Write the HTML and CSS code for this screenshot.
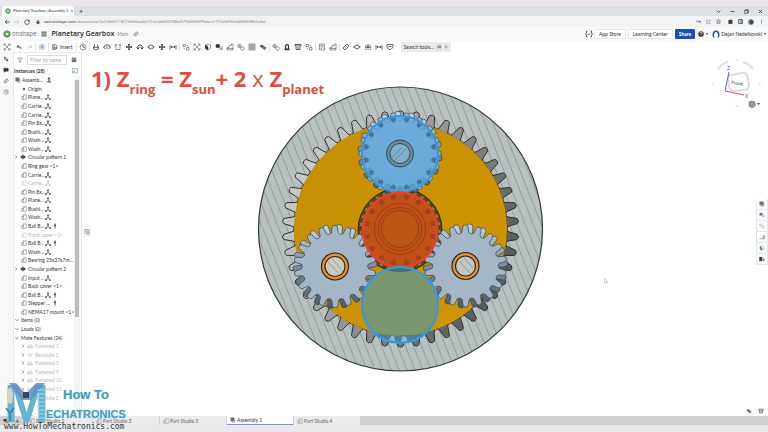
FILE: index.html
```html
<!DOCTYPE html>
<html lang="en">
<head>
    <meta charset="UTF-8">
    <meta name="viewport" content="width=device-width, initial-scale=1.0">
    <title>Planetary Gearbox | Assembly 1</title>
    <link rel="stylesheet" href="styles.css">
</head>
<body>
    <svg class="defs" aria-hidden="true">
        <symbol id="logo" viewBox="0 0 16 16"><path d="M8 1l6 3.500v7L8 15l-6-3.500v-7z" fill="#6cbb6e"/><circle cx="8" cy="8" r="3.500" fill="#e9f6e9" stroke="#3c9b49" stroke-width="1.500"/></symbol>
        <symbol id="part" viewBox="0 0 16 16"><path d="M6 14V2h8v12zM6 7H2v7h4M6 7l3-3"/></symbol>
        <symbol id="mate" viewBox="0 0 16 16"><path d="M8 2v7M8 9l-5 4M8 9l5 4" stroke-width="2"/><path d="M6 4l2-3 2 3zM1 12v3h4zM15 12v3h-4z" fill="currentColor"/></symbol>
        <symbol id="fixed" viewBox="0 0 16 16"><path d="M8 1v14M5 7h6M6 5h4" stroke-width="2"/></symbol>
        <symbol id="anchor" viewBox="0 0 16 16"><path d="M8 2v11M5 6l3-4 3 4M3 13h10" stroke-width="2.500"/></symbol>
        <symbol id="origin" viewBox="0 0 16 16"><circle cx="8" cy="8" r="2.500" fill="currentColor"/></symbol>
        <symbol id="asm" viewBox="0 0 16 16"><path d="M2 2h9v9H2z" fill="#888"/><path d="M13 5v9H5M5 5h4M5 8h4"/></symbol>
        <symbol id="right" viewBox="0 0 16 16"><path d="M5 2l6 6-6 6" stroke-width="2.500"/></symbol>
        <symbol id="down" viewBox="0 0 16 16"><path d="M2 5l6 6 6-6" stroke-width="2.500"/></symbol>
        <symbol id="caret" viewBox="0 0 16 16"><path d="M3 5h10l-5 7z" fill="currentColor" stroke="none"/></symbol>
        <symbol id="pattern" viewBox="0 0 16 16"><path d="M8 2l2 3H6zM8 14l2-3H6zM1 8l4-3v6zM15 8l-4-3v6zM5 6h6v4H5z" fill="currentColor"/></symbol>
        <symbol id="fasten" viewBox="0 0 16 16"><path d="M2 8v5h12V8M5 3v7h6V3" stroke-width="2"/></symbol>
        <symbol id="revolute" viewBox="0 0 16 16"><path d="M6 4L2 8l4 4M10 4l4 4-4 4M8 6v4" stroke-width="2"/></symbol>
        <symbol id="funnel" viewBox="0 0 16 16"><path d="M2 3h12l-5 6v5H7V9z"/></symbol>
        <symbol id="list" viewBox="0 0 16 16"><path d="M2 3h12M2 6h12M2 9h12M2 12h12" stroke-width="2"/></symbol>
        <symbol id="outline" viewBox="0 0 16 16"><path d="M1 2h14M6 6h9M6 10h9M6 14h9M3 3v11" stroke-width="1.500"/></symbol>
        <symbol id="panel" viewBox="0 0 16 16"><path d="M1 4V2h14v11H9M1 6v7h5M3 8h4v5" stroke-width="1.500"/></symbol>
        <symbol id="box" viewBox="0 0 16 16"><path d="M2 2h4M10 2h4M2 14h4M10 14h4M2 2v4M14 2v4M2 10v4M14 10v4M3 3l10 10M13 3L3 13"/></symbol>
        <symbol id="undo" viewBox="0 0 16 16"><path d="M13 13c0-5-3-6-9-6M7 3L3 7l4 4" stroke-width="2.500"/></symbol>
        <symbol id="redo" viewBox="0 0 16 16"><path d="M3 13c0-5 3-6 9-6M9 3l4 4-4 4" stroke-width="2"/></symbol>
        <symbol id="globe" viewBox="0 0 16 16"><circle cx="8" cy="8" r="6" fill="#dbe7f3" stroke="#a9c2dc"/><path d="M5 6h6M5 9h6M8 4v8"/></symbol>
        <symbol id="insert" viewBox="0 0 16 16"><path d="M9 14H2V2h7l4 4v3M6 6v5h7M10 8l3 3-3 3" stroke-width="2"/></symbol>
        <symbol id="clock" viewBox="0 0 16 16"><circle cx="8" cy="8" r="6"/><path d="M8 4v4l4 1" stroke-width="1.500"/></symbol>
        <symbol id="slot" viewBox="0 0 16 16"><path d="M3 7v5l5 2 5-2V7M5 3v6h6V3" stroke-width="1.500"/></symbol>
        <symbol id="hinge" viewBox="0 0 16 16"><path d="M2 8c0-6 12-6 12 0M8 5v7M4 7l-3 2 4 3M12 7l3 2-4 3" stroke-width="1.500"/></symbol>
        <symbol id="cyl" viewBox="0 0 16 16"><path d="M4 4v9h8V4M2 6l2-4 2 3M10 5l2-3 2 4"/></symbol>
        <symbol id="move" viewBox="0 0 16 16"><path d="M8 3v10M3 8h10" stroke-width="2"/><path d="M6 4l2-2 2 2zM6 12l2 2 2-2zM4 6L2 8l2 2zM12 6l2 2-2 2z" fill="currentColor"/></symbol>
        <symbol id="ball" viewBox="0 0 16 16"><path d="M4 10c-3-8 11-8 8 0M1 9l3 3 3-3M9 9l3 3 3-3" stroke-width="2"/></symbol>
        <symbol id="pinslot" viewBox="0 0 16 16"><path d="M3 8c0-5 10-5 10 0s-10 5-10 0M1 8h4M11 8h4" stroke-width="1.500"/></symbol>
        <symbol id="tangent" viewBox="0 0 16 16"><path d="M2 4v9M14 4v9M4 8h8M6 6L4 8l2 2M10 6l2 2-2 2" stroke-width="1.500"/></symbol>
        <symbol id="rel" viewBox="0 0 16 16"><path d="M2 3h5v4H2zM9 9h5v5H9zM9 4l4 3M7 13l-4-3"/></symbol>
        <symbol id="solid" viewBox="0 0 16 16"><path d="M3 4l5-2 5 2v7l-5 3-5-3z"/><path d="M8 7v7l-5-3V4z" fill="currentColor"/></symbol>
        <symbol id="copy" viewBox="0 0 16 16"><path d="M2 3h7v6H2z" fill="currentColor"/><path d="M7 12h7V6M11 9l4 5"/></symbol>
        <symbol id="bend" viewBox="0 0 16 16"><path d="M2 14V9h4V5h5V2h3v12zM2 11h12"/></symbol>
        <symbol id="gear" viewBox="0 0 16 16"><circle cx="5" cy="6" r="3.500"/><circle cx="11" cy="11" r="3.500"/><circle cx="5" cy="6" r="1"/></symbol>
        <symbol id="grid" viewBox="0 0 16 16"><path d="M2 2h12v12H2zM2 6h12M2 10h12M6 2v12M10 2v12"/></symbol>
        <symbol id="screw" viewBox="0 0 16 16"><path d="M2 6l4-2 4 3 4 3-4 3-4-4zM6 9l4-3" fill="#888" stroke-width="1.500"/></symbol>
        <symbol id="stamp" viewBox="0 0 16 16"><path d="M3 13h10M5 12V6a3 3 0 016 0v6z" stroke-width="2.500"/></symbol>
        <symbol id="tray" viewBox="0 0 16 16"><path d="M2 3h12v3H2zM4 7v6h8V7M6 10h4" stroke-width="1.500"/></symbol>
        <symbol id="bom" viewBox="0 0 16 16"><path d="M3 2h10v12H3zM5 5h6M5 8h6M5 11h3M10 11h1"/></symbol>
        <symbol id="cloud" viewBox="0 0 16 16"><path d="M3 9c-2-7 12-7 10 0zM2 14l2-3M8 14v-3M14 14l-2-3M6 7h4" stroke-width="1.500"/></symbol>
        <symbol id="shield" viewBox="0 0 16 16"><path d="M2 3h12v6l-3 2-3 3-3-3-3-2zM5 7h6" stroke-width="1.500"/></symbol>
        <symbol id="chat" viewBox="0 0 16 16"><path d="M2 3h12v8H8l-4 3v-3H2z" fill="currentColor"/></symbol>
        <symbol id="link" viewBox="0 0 16 16"><path d="M7 5l3-3 4 4-5 5-2-2M9 11l-3 3-4-4 5-5 2 2" stroke-width="1.500"/></symbol>
        <symbol id="versions" viewBox="0 0 16 16"><path d="M5 2v9M5 5h4M11 7v7M8 11h6" stroke-width="2.500" stroke="#2c4470"/></symbol>
    </svg>

    <div class="window-edge"></div>
    <header class="tabstrip">
        <div class="browser-tab">
            <svg class="i"><use href="#logo"/></svg>
            <span class="tab-title">Planetary Gearbox | Assembly 1</span>
            <button class="bare" aria-label="Close tab">×</button>
        </div>
        <button class="bare plus" aria-label="New tab">+</button>
        <div class="window-buttons">
            <button class="bare" aria-label="Search tabs"><svg class="i s5"><use href="#down"/></svg></button>
            <button class="bare" aria-label="Minimize"><svg class="i s5" viewBox="0 0 16 16"><path d="M2 8h12" stroke-width="2.500"/></svg></button>
            <button class="bare" aria-label="Restore"><svg class="i s5" viewBox="0 0 16 16"><path d="M2 5h9v9H2zM5 5V2h9v9h-3" stroke-width="2"/></svg></button>
            <button class="bare" aria-label="Close"><svg class="i s5" viewBox="0 0 16 16"><path d="M3 3l10 10M13 3L3 13" stroke-width="2.500"/></svg></button>
        </div>
    </header>

    <div class="addressbar">
        <button class="bare" aria-label="Back"><svg class="i" viewBox="0 0 16 16"><path d="M15 8H3M8 3L3 8l5 5" stroke-width="2"/></svg></button>
        <button class="bare off" aria-label="Forward"><svg class="i" viewBox="0 0 16 16"><path d="M1 8h12M8 3l5 5-5 5" stroke-width="1.500"/></svg></button>
        <button class="bare" aria-label="Reload"><svg class="i" viewBox="0 0 16 16"><path d="M13 5a6 6 0 10 1 4M14 2v4h-4" stroke-width="2"/></svg></button>
        <svg class="i s4 lock" viewBox="0 0 16 16"><path d="M3 7h10v7H3z" fill="currentColor"/><path d="M5 7V2h6v5" stroke-width="2"/></svg>
        <span class="url"><b>cad.onshape.com</b>/documents/5a1fd6b5118279e66bad6e72/w/dd600038bc079683d9ff9bda/e/7f1bf4f9fbfd40f8598b2cfbd</span>
        <div class="extensions">
            <svg class="i s5" viewBox="0 0 16 16"><circle cx="4" cy="8" r="3"/><path d="M7 8h8v4M11 8v3" stroke-width="2"/></svg>
            <svg class="i s5" viewBox="0 0 16 16"><path d="M6 3H2v11h11v-4M6 10c0-4 3-5 8-5M11 2l3 3-3 3"/></svg>
            <svg class="i s5" viewBox="0 0 16 16"><path d="M8 1l2 5h5l-4 4 2 5-5-3-5 3 2-5-4-4h5z" stroke-width="1.500"/></svg>
            <svg class="i s5 gap-left" viewBox="0 0 16 16"><path d="M2 4h4a2 2 0 014 0h4v4h-2v3h2v4H2z" fill="currentColor"/></svg>
            <svg class="i s5" viewBox="0 0 16 16"><path d="M2 2h12v12H2zM10 2v12" stroke-width="2.500"/></svg>
            <svg class="i" viewBox="0 0 16 16"><circle cx="8" cy="8" r="7.500" fill="#68787c" stroke="none"/><path d="M8 3v10M11 5v7" stroke="#333" stroke-width="3"/></svg>
            <svg class="i s5" viewBox="0 0 16 16"><path d="M8 2v2M8 7v2M8 12v2" stroke-width="3"/></svg>
        </div>
    </div>

    <div class="docbar">
        <svg class="i s8"><use href="#logo"/></svg>
        <span class="brand">onshape</span>
        <button class="bare menu" aria-label="Menu"><svg class="i" viewBox="0 0 16 16"><path d="M1 3h14M1 8h14M1 13h14" stroke-width="2.500"/></svg></button>
        <h1 class="doc-title">Planetary Gearbox</h1>
        <span class="branch">Main</span>
        <svg class="i"><use href="#link"/></svg>
        <div class="account">
            <svg class="i s8" viewBox="0 0 16 16"><path d="M5 2H3v4L1 8l2 2v4h2M11 2h2v4l2 2-2 2v4h-2M5 8l2 2 4-4" stroke-width="1.500"/></svg>
            <button class="btn">App Store</button>
            <button class="btn">Learning Center</button>
            <button class="btn share">Share</button>
            <svg class="i help" viewBox="0 0 16 16"><circle cx="8" cy="8" r="7" fill="#333"/><path d="M5 6c0-4 6-3 6 0 0 2-3 2-3 4M8 12v1" stroke="#fff" stroke-width="2"/></svg>
            <svg class="i s4"><use href="#caret"/></svg>
            <svg class="i s8 avatar" viewBox="0 0 16 16"><path d="M2 15C-1 6 3 1 8 1s9 5 6 14h-4l2-2c1-12-9-12-8 0l2 2z" fill="#2456a8" stroke="none"/></svg>
            <span class="user">Dejan Nedelkovski</span>
            <svg class="i s4"><use href="#caret"/></svg>
        </div>
    </div>

    <div class="toolbar">
        <svg class="i s8"><use href="#box"/></svg>
        <svg class="i undo"><use href="#undo"/></svg>
        <svg class="i redo off"><use href="#redo"/></svg>
        <span class="sep"></span>
        <svg class="i s8 blue"><use href="#globe"/></svg>
        <span class="sep"></span>
        <button class="bare insert"><svg class="i"><use href="#insert"/></svg>Insert</button>
        <span class="sep"></span>
        <svg class="i s8"><use href="#clock"/></svg>
        <span class="sep"></span>
        <svg class="i s8"><use href="#slot"/></svg>
        <svg class="i s8"><use href="#hinge"/></svg>
        <svg class="i s8"><use href="#cyl"/></svg>
        <svg class="i s8"><use href="#move"/></svg>
        <svg class="i s8"><use href="#ball"/></svg>
        <svg class="i s8"><use href="#pinslot"/></svg>
        <svg class="i s8"><use href="#move"/></svg>
        <svg class="i s8"><use href="#tangent"/></svg>
        <span class="sep"></span>
        <svg class="i s8"><use href="#rel"/></svg>
        <svg class="i s8"><use href="#box"/></svg>
        <svg class="i s8"><use href="#solid"/></svg>
        <svg class="i s8"><use href="#copy"/></svg>
        <svg class="i s8"><use href="#bend"/></svg>
        <svg class="i s8"><use href="#gear"/></svg>
        <svg class="i s8"><use href="#grid"/></svg>
        <svg class="i s8"><use href="#screw"/></svg>
        <span class="sep"></span>
        <svg class="i s8"><use href="#gear"/></svg>
        <svg class="i s8"><use href="#stamp"/></svg>
        <svg class="i s8"><use href="#tray"/></svg>
        <svg class="i s8"><use href="#rel"/></svg>
        <span class="sep"></span>
        <svg class="i s8"><use href="#bom"/></svg>
        <svg class="i s8"><use href="#bend"/></svg>
        <span class="sep"></span>
        <svg class="i s8"><use href="#link"/></svg>
        <svg class="i s8"><use href="#pinslot"/></svg>
        <svg class="i s8"><use href="#cloud"/></svg>
        <svg class="i s8"><use href="#tangent"/></svg>
        <svg class="i s8"><use href="#shield"/></svg>
        <button class="search"><span>Search tools...</span><kbd>alt</kbd><kbd>c</kbd></button>
    </div>

    <main class="workspace">
        <nav class="rail">
            <svg class="i"><use href="#versions"/></svg>
            <svg class="i"><use href="#chat"/></svg>
            <svg class="i"><use href="#link"/></svg>
            <svg class="i"><use href="#clock"/></svg>
        </nav>

        <aside class="tree">
            <div class="filter">
                <svg class="i"><use href="#funnel"/></svg>
                <input type="text" placeholder="Filter by name" aria-label="Filter by name">
                <svg class="i"><use href="#list"/></svg>
            </div>
            <div class="instances"><span>Instances (28)</span><svg class="i blue"><use href="#panel"/></svg></div>
            <div class="tree-body">
                <ul class="rows">
                    <li class="root"><svg class="i"><use href="#asm"/></svg><span class="long">Assemb...</span><svg class="i"><use href="#anchor"/></svg></li>
                    <li><svg class="i"><use href="#origin"/></svg>Origin</li>
                    <li><svg class="i"><use href="#part"/></svg><span class="short">Plane...</span><svg class="i"><use href="#mate"/></svg></li>
                    <li><svg class="i"><use href="#part"/></svg><span class="short">Carrie...</span><svg class="i"><use href="#mate"/></svg></li>
                    <li><svg class="i"><use href="#part"/></svg><span class="short">Carrie...</span><svg class="i"><use href="#mate"/></svg></li>
                    <li><svg class="i"><use href="#part"/></svg><span class="short">Pin 8x...</span><svg class="i"><use href="#mate"/></svg></li>
                    <li><svg class="i"><use href="#part"/></svg><span class="short">Bushi...</span><svg class="i"><use href="#mate"/></svg></li>
                    <li><svg class="i"><use href="#part"/></svg><span class="short">Wash...</span><svg class="i"><use href="#mate"/></svg></li>
                    <li><svg class="i"><use href="#part"/></svg><span class="short">Wash...</span><svg class="i"><use href="#mate"/></svg></li>
                    <li class="group"><svg class="i s4"><use href="#right"/></svg><svg class="i"><use href="#pattern"/></svg>Circular pattern 1</li>
                    <li><svg class="i"><use href="#part"/></svg>Ring gear &lt;1&gt;</li>
                    <li><svg class="i"><use href="#part"/></svg><span class="short">Carrie...</span><svg class="i"><use href="#mate"/></svg></li>
                    <li class="off"><svg class="i"><use href="#part"/></svg><span class="short">Carrie...</span><svg class="i"><use href="#mate"/></svg></li>
                    <li><svg class="i"><use href="#part"/></svg><span class="short">Pin 8x...</span><svg class="i"><use href="#mate"/></svg></li>
                    <li><svg class="i"><use href="#part"/></svg><span class="short">Plane...</span><svg class="i"><use href="#mate"/></svg></li>
                    <li><svg class="i"><use href="#part"/></svg><span class="short">Bushi...</span><svg class="i"><use href="#mate"/></svg></li>
                    <li><svg class="i"><use href="#part"/></svg><span class="short">Wash...</span><svg class="i"><use href="#mate"/></svg></li>
                    <li><svg class="i"><use href="#part"/></svg><span class="short">Ball B...</span><svg class="i"><use href="#mate"/></svg><svg class="i"><use href="#fixed"/></svg></li>
                    <li class="off"><svg class="i"><use href="#part"/></svg>Front cover &lt;1&gt;</li>
                    <li><svg class="i"><use href="#part"/></svg><span class="short">Ball B...</span><svg class="i"><use href="#mate"/></svg><svg class="i"><use href="#fixed"/></svg></li>
                    <li><svg class="i"><use href="#part"/></svg><span class="short">Wash...</span><svg class="i"><use href="#mate"/></svg></li>
                    <li><svg class="i"><use href="#part"/></svg>Bearing 25x37x7m...</li>
                    <li class="group"><svg class="i s4"><use href="#right"/></svg><svg class="i"><use href="#pattern"/></svg>Circular pattern 2</li>
                    <li><svg class="i"><use href="#part"/></svg><span class="short">Input ...</span><svg class="i"><use href="#mate"/></svg></li>
                    <li><svg class="i"><use href="#part"/></svg>Back cover &lt;1&gt;</li>
                    <li><svg class="i"><use href="#part"/></svg><span class="short">Ball B...</span><svg class="i"><use href="#mate"/></svg><svg class="i"><use href="#fixed"/></svg></li>
                    <li><svg class="i"><use href="#part"/></svg><span class="long">Stepper ...</span><svg class="i"><use href="#fixed"/></svg></li>
                    <li><svg class="i"><use href="#part"/></svg>NEMA17 mount &lt;1&gt;</li>
                    <li class="section"><svg class="i s4"><use href="#down"/></svg>Items (0)</li>
                    <li class="section"><svg class="i s4"><use href="#down"/></svg>Loads (0)</li>
                    <li class="section"><svg class="i s4"><use href="#down"/></svg>Mate Features (24)</li>
                    <li class="feature"><svg class="i s4"><use href="#right"/></svg><svg class="i"><use href="#fasten"/></svg>Fastened 1</li>
                    <li class="feature"><svg class="i s4"><use href="#right"/></svg><svg class="i"><use href="#revolute"/></svg>Revolute 1</li>
                    <li class="feature"><svg class="i s4"><use href="#right"/></svg><svg class="i"><use href="#fasten"/></svg>Fastened 5</li>
                    <li class="feature"><svg class="i s4"><use href="#right"/></svg><svg class="i"><use href="#fasten"/></svg>Fastened 9</li>
                    <li class="feature"><svg class="i s4"><use href="#right"/></svg><svg class="i"><use href="#fasten"/></svg>Fastened 10</li>
                    <li class="feature"><svg class="i s4"><use href="#right"/></svg><svg class="i"><use href="#fasten"/></svg>Fastened 11</li>
                    <li class="feature"><svg class="i s4"><use href="#right"/></svg><svg class="i"><use href="#revolute"/></svg>Revolute 2</li>
                    <li class="feature"><svg class="i s4"><use href="#right"/></svg><svg class="i"><use href="#revolute"/></svg></li>
                    <li class="feature"><svg class="i s4"><use href="#right"/></svg><svg class="i"><use href="#fasten"/></svg></li>
                </ul>
                <div class="scrollbar"><div class="thumb"></div></div>
            </div>
        </aside>

        <section class="canvas">
            <p class="formula">1) Z<sub>ring</sub> = Z<sub>sun</sub>+ 2 <span class="times">x</span> Z<sub>planet</sub></p>

            <svg class="model" viewBox="256 85 288 288" role="img" aria-label="Planetary gearbox section view">
                <defs>
                    <clipPath id="body"><circle cx="400.500" cy="229" r="142"/></clipPath>
                    <linearGradient id="tooth" x1="0" x2="0" y1="0" y2="1">
                        <stop offset="0" stop-color="#c3d6e4"/><stop offset=".5" stop-color="#7b8e9c"/><stop offset="1" stop-color="#4d5b66"/>
                    </linearGradient>
                    <linearGradient id="plate" x1="0" x2="1" y1="0" y2="1">
                        <stop offset="0" stop-color="#c58f06"/><stop offset="1" stop-color="#d19500"/>
                    </linearGradient>
                </defs>
                <circle cx="400.500" cy="229" r="142" fill="#b9c1c0"/>
                <g clip-path="url(#body)"><g id="hatch" stroke="#7b8382" stroke-width=".6"></g></g>
                <circle cx="400.500" cy="229" r="142" fill="none" stroke="#303638" stroke-width="1.200"/>
                <circle cx="400.500" cy="229" r="107" fill="url(#plate)" stroke="#59430c" stroke-width=".8"/>
                <g id="pockets" stroke="#2b2f31" stroke-width="1" stroke-linejoin="round"></g>
                <circle cx="400" cy="230" r="42" fill="#5b4714" stroke="#2c250f"/>
                <circle cx="400" cy="230" r="39.500" fill="none" stroke="#a08a48" stroke-width="1.500" stroke-dasharray="3 5"/>
                <g id="planets" stroke="#34424c" stroke-width=".7" stroke-linejoin="round"></g>

                <g stroke="#2d2417">
                    <circle cx="335" cy="266.500" r="13.500" fill="#e2933a" stroke-width="1.200"/>
                    <circle cx="335" cy="266.500" r="10" fill="#c8cbbd" stroke-width="1.200"/>
                    <circle cx="465.500" cy="266" r="13.500" fill="#e2933a" stroke-width="1.200"/>
                    <circle cx="465.500" cy="266" r="10" fill="#c0c6c2" stroke-width="1.200"/>
                    <path d="M328 262l11 12M332 259l10 11M459 261l11 12M464 258l9 10" stroke="#858b86" stroke-width=".8"/>
                </g>

                <circle cx="400" cy="154" r="38" fill="#5ba9de" fill-opacity=".8" stroke="#3396e4" stroke-width="2"/>
                <g id="planet-marks" fill="#4a7899" stroke="#3a6486" stroke-width=".6"></g>
                <circle cx="400" cy="153.500" r="13.500" fill="#6d8c96" stroke="#29495c"/>
                <circle cx="400" cy="153.500" r="10" fill="#82b0cb" stroke="#29495c"/>
                <path d="M394 161l13-13M392 158l10-11" stroke="#557d96" stroke-width=".8"/>

                <circle cx="400" cy="230" r="37.500" fill="#c15019" stroke="#ea3f35" stroke-width="2"/>
                <g id="sun-marks" fill="#a5431f" stroke="#8f3a1d" stroke-width=".5"></g>
                <g fill="none" stroke="#89360f" stroke-width=".7">
                    <circle cx="400" cy="229" r="25.500"/>
                    <circle cx="400" cy="229" r="21.500"/>
                    <circle cx="400" cy="229" r="18.500" fill="#bc5617"/>
                </g>
                <path d="M398 226h4v4h-4zM400 228h.5" fill="none" stroke="#d63a28" stroke-width=".7"/>

                <circle cx="400" cy="305" r="38" fill="#7b966f"/>
                <path d="M386 270q14 4 28 0l-6-3h-16z" fill="#426c79"/>
                <path d="M374 333q26 5 52 0-26 19-52 0z" fill="#4b7f98"/>
                <path d="M388 341l3-6h3l2 7M400 343l2-7h4l2 5" fill="#86b8d2" stroke="#3d6c86" stroke-width=".6"/>
                <circle cx="400" cy="305" r="38" fill="none" stroke="#3599df" stroke-width="2.200"/>
            </svg>

            <button class="bare handle" aria-label="Collapse list"><svg class="i"><use href="#outline"/></svg></button>

            <svg class="cube" viewBox="0 0 54 56" role="img" aria-label="View cube">
                <path d="M8 12q5-6 10-7M33 5q6 2 10 7" stroke="#e3e3e3" stroke-width="2.500" fill="none"/>
                <path d="M25 4l2-2 2 2zM25 48l2 2 2-2zM4 25l-2 2 2 2zM49 25l2 2-2 2z" fill="#e3e3e3"/>
                <path d="M21 18l11-2q3-1 5 2l2 10q0 4-4 5l-11 1q-4 0-5-4l-1-9q0-3 3-3z" fill="#fff" stroke="#d8dbe5" stroke-width="2"/>
                <path d="M19 15l-4 19" stroke="#5867bd"/><path d="M15 34l19 4" stroke="#c65c68"/>
                <text x="21" y="28" class="cube-face" transform="rotate(8 27 27)">Front</text>
                <text x="17" y="13" class="axis-z">Z</text><text x="35" y="41" class="axis-x">X</text>
                <path d="M39 45l3-1 3 1v4l-3 2-3-2z" fill="#999" stroke="#666" stroke-width=".6"/><path d="M47 46h3l-1.500 2z" fill="#444"/>
            </svg>

            <div class="side-tools">
                <button aria-label="Bill of materials"><svg class="i"><use href="#asm"/></svg></button>
                <button aria-label="Configurations"><svg class="i blue"><use href="#copy"/></svg></button>
                <button aria-label="Exploded views"><svg class="i grey"><use href="#rel"/></svg></button>
                <button aria-label="Named positions"><svg class="i blue" viewBox="0 0 16 16"><path d="M1 13h14V9h-4v4M11 9V4h3v5" stroke-width="1.500"/></svg></button>
                <button aria-label="Display states"><svg class="i blue"><use href="#solid"/></svg></button>
                <button aria-label="Properties"><svg class="i" viewBox="0 0 16 16"><path d="M1 3h7v10H1z" fill="currentColor"/><path d="M8 6h6v7H8M10 8l3 4M13 8l-3 4"/></svg></button>
            </div>

            <svg class="i pointer" viewBox="0 0 16 16"><path d="M4 1v12l3-3 2 5 2-1-2-4h4z" fill="#fff"/></svg>

            <div class="measure">
                <svg class="i"><use href="#screw"/></svg>
                <svg class="i"><use href="#tray"/></svg>
            </div>
        </section>
    </main>

    <footer class="doc-tabs">
        <button class="bare" aria-label="Tab manager"><svg class="i"><use href="#copy"/></svg></button>
        <button class="bare add" aria-label="Add tab">+</button>
        <button class="doc-tab"><svg class="i"><use href="#part"/></svg>Part Studio 2</button>
        <button class="doc-tab"><svg class="i"><use href="#part"/></svg>Part Studio 3</button>
        <button class="doc-tab"><svg class="i"><use href="#part"/></svg>Part Studio 5</button>
        <button class="doc-tab active"><svg class="i"><use href="#asm"/></svg>Assembly 1</button>
        <button class="doc-tab"><svg class="i"><use href="#part"/></svg>Part Studio 4</button>
    </footer>
    <div class="window-bottom"></div>

    <div class="watermark">
        <div class="wm-logo">
            <span class="wm-m">M</span>
            <div class="wm-words">
                <span class="wm-how">How To</span>
                <span class="wm-mech">ECHATRONICS</span>
            </div>
            <svg class="wm-art" viewBox="0 0 44 40">
                <path d="M12 1l10 11L32 1h9L27 18h-9L5 1z" fill="#5f8fc4" opacity=".85"/>
                <path d="M19 10h6v6h-6z" fill="#3d4650"/>
                <ellipse cx="6" cy="14" rx="3" ry="8" fill="#dcd3b8"/>
                <path d="M2 26l4 5 4-5M6 31v8" stroke="#3c78a8" stroke-width="1.500" fill="none"/>
                <path d="M33 8h8M33 12h8M33 16h8M33 20h8M33 24h8M33 28h8M33 32h8M33 36h8" stroke="#a8d7e4"/>
            </svg>
        </div>
        <a class="wm-url" href="#">www.HowToMechatronics.com</a>
    </div>

    <script>
        function point(cx, cy, r, a) {
            return (cx + r * Math.cos(a)).toFixed(2) + ' ' + (cy + r * Math.sin(a)).toFixed(2);
        }

        function addPath(parent, d, fill) {
            const path = document.createElementNS('http://www.w3.org/2000/svg', 'path');
            path.setAttribute('d', d);
            if (fill) path.setAttribute('fill', fill);
            document.getElementById(parent).appendChild(path);
        }

        function gearPath(cx, cy, root, tip, teeth, phase) {
            const step = Math.PI * 2 / teeth;
            let d = '';
            for (let i = 0; i < teeth; i++) {
                const a = phase + i * step;
                d += (i ? 'L' : 'M') + point(cx, cy, root, a - step * 0.28);
                d += 'L' + point(cx, cy, tip - 2, a - step * 0.2);
                d += 'Q' + point(cx, cy, tip + 1, a - step * 0.14) + ' ' + point(cx, cy, tip, a);
                d += 'Q' + point(cx, cy, tip + 1, a + step * 0.14) + ' ' + point(cx, cy, tip - 2, a + step * 0.2);
                d += 'L' + point(cx, cy, root, a + step * 0.28);
                d += 'Q' + point(cx, cy, root - 3, a + step * 0.5) + ' ' + point(cx, cy, root, a + step * 0.72);
            }
            return d + 'Z';
        }

        // section hatching
        for (let x = 190; x < 560; x += 8) {
            addPath('hatch', 'M' + x + ' 85l115 290');
        }

        // spaces between the ring gear teeth, lit from the left
        const ringTeeth = 46;
        for (let i = 0; i < ringTeeth; i++) {
            const a = Math.PI / 2 + i * Math.PI * 2 / ringTeeth;
            const shade = Math.round(145 - 50 * Math.cos(a) - 25 * Math.sin(a));
            const d = 'M' + point(400.5, 229, 106.5, a - 0.05) + 'L' + point(400.5, 229, 109, a - 0.041) +
                'L' + point(400.5, 229, 117, a - 0.022) +
                'Q' + point(400.5, 229, 119.5, a) + ' ' + point(400.5, 229, 117, a + 0.022) +
                'L' + point(400.5, 229, 109, a + 0.041) + 'L' + point(400.5, 229, 106.5, a + 0.05);
            addPath('pockets', d, 'rgb(' + shade + ',' + shade + ',' + shade + ')');
        }

        // back face of each helical gear first, then the front face
        [[335, 266.5, 0.17], [465.5, 266, 0.17], [400, 153.5, 0]].forEach(function (p) {
            addPath('planets', gearPath(p[0], p[1], 34, 42, 18, p[2] + 0.12), 'url(#tooth)');
            addPath('planets', gearPath(p[0], p[1], 34, 41, 18, p[2]), '#a5b6c6');
        });

        // tooth spaces seen inside the pitch circles
        function marks(parent, cx, cy, r, count) {
            for (let i = 0; i < count; i++) {
                const a = Math.PI / 2 + (i + 0.5) * Math.PI * 2 / count;
                addPath(parent, 'M' + point(cx, cy, r + 2, a - 0.06) + 'L' + point(cx, cy, r, a - 0.06) +
                    'Q' + point(cx, cy, r - 4, a) + ' ' + point(cx, cy, r, a + 0.06) +
                    'L' + point(cx, cy, r + 2, a + 0.06) + 'Z');
            }
        }
        marks('planet-marks', 400, 153.5, 34, 16);
        marks('sun-marks', 400, 230, 33, 16);
    </script>
</body>
</html>
```
FILE: styles.css
```css
* {
    box-sizing: border-box;
}
body {
    margin: 0;
    height: 100vh;
    display: flex;
    flex-direction: column;
    overflow: hidden;
    background-color: #fff;
    font-family: Lato, "Liberation Sans", sans-serif;
    font-size: 5px;
    line-height: 8px;
    color: #333;
}
button, input {
    font: inherit;
    color: inherit;
    padding: 0;
    margin: 0;
}
.defs {
    position: absolute;
    width: 0;
    height: 0;
}
.i {
    width: 6px;
    height: 6px;
    flex: none;
    fill: none;
    stroke: currentColor;
    stroke-width: 1;
    display: block;
}
.s4 {
    width: 4px;
    height: 4px;
}
.s5 {
    width: 5px;
    height: 5px;
}
.s8 {
    width: 8px;
    height: 8px;
}
.bare {
    display: flex;
    align-items: center;
    border: none;
    background: none;
}
.off {
    color: #b5b5b5;
}
.grey {
    color: #888;
}
.blue {
    color: #4a76a8;
}

/* Browser window */
.window-edge {
    height: 6px;
    flex: none;
    background-color: #ece7eb;
}
.tabstrip {
    height: 10px;
    flex: none;
    display: flex;
    align-items: center;
    background-color: #dde1e6;
}
.browser-tab {
    width: 72px;
    height: 10px;
    margin-left: 2px;
    padding: 0 2px 0 3px;
    display: flex;
    align-items: center;
    gap: 2px;
    background-color: #fff;
    border-radius: 3px 3px 0 0;
}
.tab-title {
    flex: 1;
    font-size: 4px;
    white-space: nowrap;
}
.plus {
    margin-left: 5px;
    font-size: 7px;
}
.window-buttons {
    margin-left: auto;
    padding-right: 5px;
    display: flex;
    gap: 9px;
}
.addressbar {
    height: 11px;
    flex: none;
    display: flex;
    align-items: center;
    gap: 4px;
    padding: 0 4px;
    background-color: #f2f3f5;
}
.lock {
    margin-left: 2px;
}
.url {
    font-family: Roboto, sans-serif;
    font-size: 4px;
    color: #888;
}
.url b {
    font-weight: 400;
    color: #444;
}
.extensions {
    margin-left: auto;
    display: flex;
    align-items: center;
    gap: 5px;
}
.gap-left {
    margin-left: 2px;
}

/* Document header */
.docbar {
    height: 14px;
    flex: none;
    display: flex;
    align-items: center;
    padding: 0 1px 0 3px;
    background-color: #f9f9fc;
}
.brand {
    margin-left: 1px;
    font-family: Inter, sans-serif;
    font-size: 6px;
    color: #777;
}
.menu {
    margin: 0 4px 0 5px;
}
.doc-title {
    margin: 0;
    font-family: "Open Sans", sans-serif;
    font-size: 7px;
    font-weight: 600;
    color: #222;
}
.branch {
    margin: 0 5px 0 3px;
    color: #888;
}
.account {
    margin-left: auto;
    display: flex;
    align-items: center;
    gap: 1px;
}
.btn {
    height: 10px;
    margin-right: 1px;
    padding: 0 4px;
    border: 1px solid #e8e8ec;
    border-radius: 1px;
    background-color: #fff;
}
.share {
    padding: 0 3px;
    border-color: #1c4fae;
    background-color: #1c4fae;
    color: #fff;
    font-weight: 700;
}
.help {
    margin-left: 1px;
}
.avatar {
    margin-left: 2px;
}

/* Feature toolbar */
.toolbar {
    height: 11px;
    flex: none;
    display: flex;
    align-items: center;
    gap: 3px;
    padding-left: 3px;
}
.undo {
    margin-left: 2px;
}
.redo {
    margin-left: 2px;
}
.sep {
    width: 1px;
    height: 8px;
    margin: 0 -1px;
    background-color: #e2e2e2;
}
.insert {
    gap: 2px;
    margin: 0 1px;
}
.search {
    height: 10px;
    margin-left: 4px;
    padding: 0 3px;
    display: flex;
    align-items: center;
    gap: 2px;
    border: none;
    background-color: #ececec;
}
.search kbd {
    padding: 0 1px;
    font-family: inherit;
    font-size: 4px;
    line-height: 6px;
    background-color: #dcdcdc;
}

/* Left side */
.workspace {
    flex: 1;
    min-height: 0;
    display: flex;
}
.rail {
    width: 13px;
    padding: 4px 3px;
    display: flex;
    flex-direction: column;
    gap: 5px;
    background-color: #f9f9f9;
}
.tree {
    width: 69px;
    display: flex;
    flex-direction: column;
    overflow: hidden;
    border: 1px solid #e8e8e8;
    border-bottom: none;
}
.filter {
    display: flex;
    align-items: center;
    justify-content: space-between;
    padding: 2px 4px 0 3px;
}
.filter input {
    width: 40px;
    height: 10px;
    padding: 0 2px;
    border: 1px solid #ddd;
}
.filter input::placeholder {
    color: #aaa;
}
.instances {
    height: 11px;
    flex: none;
    display: flex;
    align-items: center;
    justify-content: space-between;
    padding: 0 3px 0 0;
    font-weight: 700;
}
.tree-body {
    flex: 1;
    min-height: 0;
    margin-bottom: -3px;
    display: flex;
}
.rows {
    flex: 1;
    margin: 0;
    padding: 0;
    list-style: none;
    display: grid;
    grid-auto-rows: minmax(8px, 1fr);
}
.rows li {
    display: flex;
    align-items: center;
    gap: 1px;
    padding-left: 7px;
    white-space: nowrap;
}
.rows .root {
    padding-left: 1px;
}
.rows .group {
    padding-left: 0;
    gap: 2px;
}
.rows .section {
    padding-left: 1px;
    gap: 2px;
}
.rows .feature {
    padding-left: 7px;
    gap: 2px;
    color: #bbb;
}
.feature .s4 {
    color: #444;
}
.short {
    width: 16px;
}
.long {
    width: 23px;
}
.scrollbar {
    width: 6px;
    margin-right: 1px;
    padding: 4px 1px 0;
    background-color: #f5f5f5;
}
.thumb {
    height: 70%;
    background-color: #bcbcbc;
}

/* Model view */
.canvas {
    position: relative;
    flex: 1;
}
.formula {
    position: absolute;
    left: 9px;
    top: 11px;
    margin: 0;
    font-family: "Open Sans", sans-serif;
    font-size: 22px;
    font-weight: 700;
    line-height: 30px;
    white-space: nowrap;
    color: #e04d42;
}
.formula sub {
    position: relative;
    top: 7px;
    font-size: 13px;
    line-height: 0;
    vertical-align: baseline;
}
.times {
    font-weight: 400;
}
.model {
    position: absolute;
    left: 174px;
    top: 33px;
    width: 288px;
    height: 288px;
}
.handle {
    position: absolute;
    left: 1px;
    top: 174px;
    width: 8px;
    height: 11px;
    border: 1px solid #eee;
    color: #555;
}
.cube {
    position: absolute;
    right: 4px;
    top: 5px;
    width: 54px;
    height: 56px;
}
.cube-face {
    font-size: 5px;
    fill: #444;
}
.axis-z {
    font-size: 5px;
    fill: #4656b5;
}
.axis-x {
    font-size: 5px;
    fill: #c04a58;
}
.side-tools {
    position: absolute;
    right: 0;
    top: 147px;
    display: flex;
    flex-direction: column;
}
.side-tools button {
    width: 12px;
    height: 11px;
    display: flex;
    align-items: center;
    justify-content: center;
    border: 1px solid #e6e6e6;
    border-top: none;
    background-color: #fff;
}
.pointer {
    position: absolute;
    left: 521px;
    top: 226px;
    color: #888;
}
.measure {
    position: absolute;
    right: 4px;
    bottom: 2px;
    display: flex;
    gap: 6px;
}

/* Document tabs */
.doc-tabs {
    height: 9px;
    flex: none;
    display: flex;
    align-items: center;
    padding-left: 3px;
    background-color: #d0d0d0;
}
.add {
    width: 17px;
    padding-left: 6px;
    font-size: 8px;
}
.doc-tab {
    width: 67px;
    height: 9px;
    display: flex;
    align-items: center;
    gap: 1px;
    padding-left: 3px;
    border: none;
    border-right: 1px solid #d4d4d4;
    background-color: #ebebeb;
    color: #666;
}
.doc-tab.active {
    background-color: #fff;
    border-bottom: 1px solid #7d92c8;
    color: #333;
}
.window-bottom {
    height: 7px;
    flex: none;
    background-color: #ebe8ec;
}

/* Channel watermark over the page */
.watermark {
    position: absolute;
    left: 4px;
    bottom: 0;
    color: #489dbd;
}
.wm-logo {
    position: relative;
    display: flex;
    align-items: flex-end;
}
.wm-m {
    width: 42px;
    font-family: "Liberation Sans", sans-serif;
    font-size: 54px;
    font-weight: 700;
    line-height: 38px;
    color: #64b4cf;
}
.wm-words {
    display: flex;
    flex-direction: column;
    font-family: "Liberation Sans", sans-serif;
    font-weight: 700;
    line-height: 16px;
    text-shadow: 0 0 1px #9ccfe0;
}
.wm-how {
    padding-left: 17px;
    font-size: 13px;
    line-height: 22px;
}
.wm-mech {
    font-size: 11px;
}
.wm-art {
    position: absolute;
    left: 0;
    bottom: 0;
    width: 44px;
    height: 40px;
}
.wm-url {
    display: block;
    font-family: "DejaVu Sans Mono", monospace;
    font-size: 8px;
    line-height: 10px;
    color: #333;
    text-decoration: none;
}
```
